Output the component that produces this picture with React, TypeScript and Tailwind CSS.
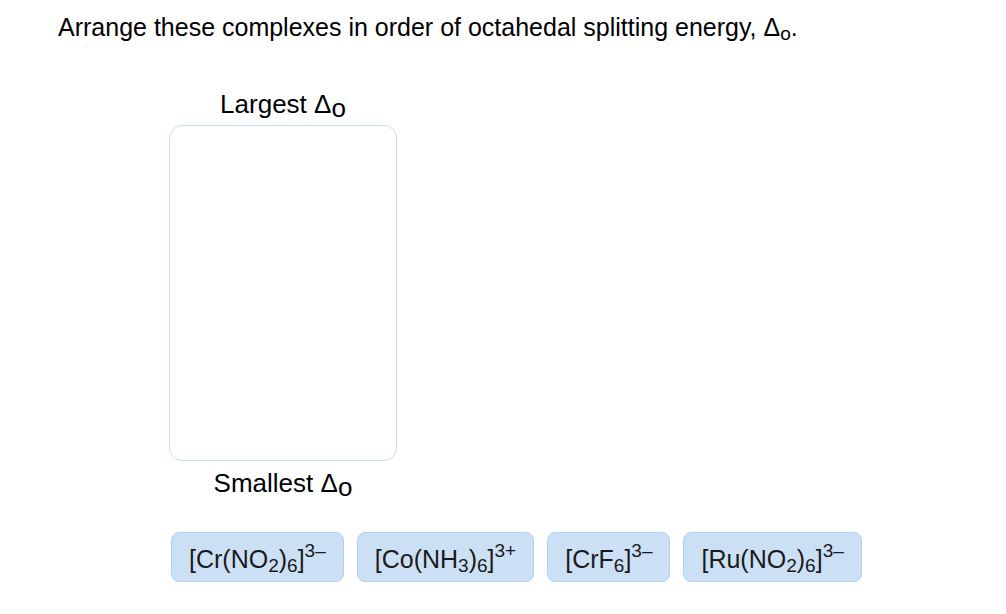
import React from 'react';

const font = { fontFamily: '"Liberation Sans", Arial, sans-serif' };

const Sub = ({ children }: { children: React.ReactNode }) => (
  <sub className="text-[19px] relative top-[4px] align-baseline">{children}</sub>
);

const Sup = ({ children }: { children: React.ReactNode }) => (
  <sup className="text-[19px] relative -top-[11px] align-baseline">{children}</sup>
);

const Chip = ({ children }: { children: React.ReactNode }) => (
  <div className="h-[50px] px-[17px] flex items-center rounded-[8px] bg-[#cce0f5] border border-[#b5d1ef] text-[25px] text-[#1a1a1a] leading-none">
    <span className="relative top-[2px]">{children}</span>
  </div>
);

export default function App() {
  return (
    <div className="w-[1006px] h-[614px] bg-white text-black" style={font}>
      <div className="pl-[58px] pt-[12px] text-[25px] leading-[30px]">
        Arrange these complexes in order of octahedal splitting energy, Δ
        <span className="text-[19px] relative top-[4px]">o</span>.
      </div>

      <div className="ml-[169px] mt-[44px] w-[228px] flex flex-col items-center">
        <div className="text-[26px] leading-[30px]">
          Largest Δ<span className="relative top-[4px]">o</span>
        </div>
        <div className="mt-[6px] w-[228px] h-[336px] rounded-[13px] border border-[#c9ddf1] bg-white" />
        <div className="mt-[7px] text-[26px] leading-[30px]">
          Smallest Δ<span className="relative top-[4px]">o</span>
        </div>
      </div>

      <div className="ml-[171px] mt-[34px] flex gap-[13px]">
        <Chip>
          [Cr(NO<Sub>2</Sub>)<Sub>6</Sub>]<Sup>3–</Sup>
        </Chip>
        <Chip>
          [Co(NH<Sub>3</Sub>)<Sub>6</Sub>]<Sup>3+</Sup>
        </Chip>
        <Chip>
          [CrF<Sub>6</Sub>]<Sup>3–</Sup>
        </Chip>
        <Chip>
          [Ru(NO<Sub>2</Sub>)<Sub>6</Sub>]<Sup>3–</Sup>
        </Chip>
      </div>
    </div>
  );
}
